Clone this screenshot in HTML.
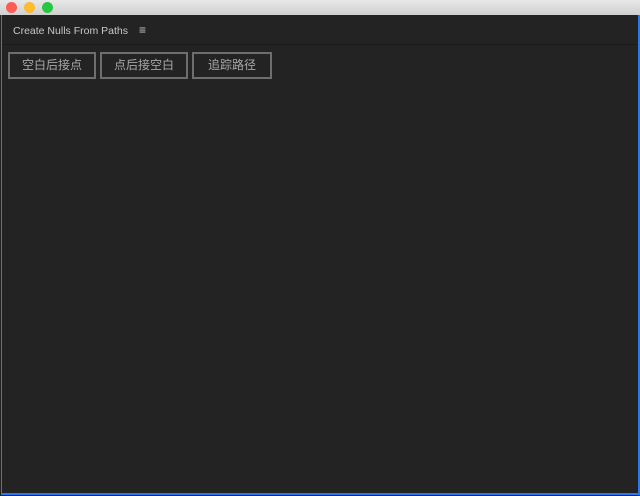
<!DOCTYPE html>
<html><head><style>
body{margin:0;width:640px;height:496px;background:#232323;overflow:hidden;position:relative;font-family:"Liberation Sans","Noto Sans CJK SC",sans-serif}
.tb{position:absolute;left:0;top:0;width:640px;height:15px;background:linear-gradient(#e8e8e8,#d0d0d0);}
.d{position:absolute;top:2px;width:11px;height:11px;border-radius:50%}
.win{position:absolute;left:1px;top:15px;width:636px;height:478px;border:1px solid #2a78f0;border-right-width:2px;border-bottom-width:2px;border-top:none;background:#232323}
.hdr{position:absolute;left:0;top:0;width:636px;height:29px;border-bottom:1px solid #1a1a1a;}
.t{position:absolute;left:11px;top:10px;font-size:10.5px;color:#c8c8c8}
.m{position:absolute;left:137px;top:8px;font-size:12px;color:#c8c8c8}
.b{position:absolute;top:37px;height:23px;border:2px solid #6e6e6e;color:#a8a8a8;font-size:12px;line-height:23px;text-align:center;box-sizing:content-box}
</style></head><body>
<div class="tb">
<div class="d" style="left:6px;background:#fd5b55"></div>
<div class="d" style="left:24px;background:#fdbb2e"></div>
<div class="d" style="left:42px;background:#27c73f"></div>
</div>
<div class="win">
<div class="hdr"><div class="t">Create Nulls From Paths</div><div class="m">≡</div></div>
<div class="b" style="left:6px;width:84px">空白后接点</div>
<div class="b" style="left:98px;width:84px">点后接空白</div>
<div class="b" style="left:190px;width:76px">追踪路径</div>
</div>
</body></html>
